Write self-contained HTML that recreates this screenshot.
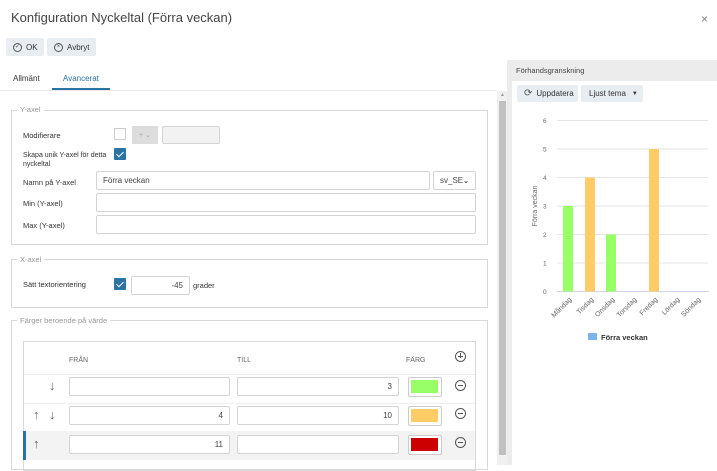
<!DOCTYPE html>
<html><head><meta charset="utf-8"><style>
*{box-sizing:border-box;margin:0;padding:0}
body{width:717px;height:465px;overflow:hidden;background:#fff;font-family:"Liberation Sans",sans-serif;color:#333;position:relative;font-size:8px}
.a{position:absolute}
.inp{position:absolute;border:1px solid #d4d4d4;background:#fff;border-radius:2px;font-size:8px;color:#444;padding:0 6px;display:flex;align-items:center}
.r{justify-content:flex-end}
.cb{position:absolute;width:12px;height:12px;background:#2a73a3;border-radius:1px}
.cb:after{content:"";position:absolute;left:4px;top:1.5px;width:3px;height:6px;border:solid #fff;border-width:0 1.5px 1.5px 0;transform:rotate(45deg)}
.fs{position:absolute;border:1px solid #d8d8d8}
.lg{position:absolute;background:#fff;color:#999;font-size:7.5px;padding:0 3px}
.lbl{position:absolute;font-size:7.5px;color:#333}
.btn{position:absolute;background:#e8edf2;border-radius:2px;font-size:8px;color:#333;display:flex;align-items:center}
.circ{display:inline-block;width:9px;height:9px;border:1px solid #555;border-radius:50%;position:relative;margin-right:4px;font-size:6px;line-height:7px;text-align:center;color:#555}
.sw{position:absolute;border:1px solid #ccc;background:#fff;border-radius:2px}
.sw i{position:absolute;left:2px;top:2px;width:27px;height:13px}
.arr{position:absolute;font-size:13px;color:#666;font-weight:100}
.mi{position:absolute;width:11px;height:11px;border:1px solid #555;border-radius:50%}
.mi:after{content:"";position:absolute;left:2px;top:4px;width:5px;height:1px;background:#555}
</style></head><body>
<div class="a" style="left:11px;top:10px;font-size:13px;color:#444">Konfiguration Nyckeltal (Förra veckan)</div>
<div class="a" style="left:701px;top:12px;font-size:12px;color:#888">×</div>
<div class="btn" style="left:6px;top:38px;width:38px;height:18px;padding-left:7px"><span class="circ">✓</span>OK</div>
<div class="btn" style="left:47px;top:38px;width:49px;height:18px;padding-left:7px"><span class="circ">×</span>Avbryt</div>
<div class="a" style="left:13px;top:74px;font-size:8px">Allmänt</div>
<div class="a" style="left:63px;top:74px;font-size:8px;color:#2a73a3">Avancerat</div>
<div class="a" style="left:52px;top:88px;width:58px;height:2px;background:#2a73a3"></div>
<div class="a" style="left:0;top:90px;width:497px;height:1px;background:#e8e8e8"></div>
<div class="a" style="left:497px;top:91px;width:10px;height:374px;background:#f0f0f0"></div>
<div class="a" style="left:499px;top:101px;width:7px;height:354px;background:#c1c1c1"></div>
<div class="a" style="left:500px;top:92px;font-size:5px;color:#999">▲</div>
<div class="fs" style="left:11px;top:110px;width:477px;height:135px"></div>
<div class="lg" style="left:17px;top:105px">Y-axel</div>
<div class="lbl" style="left:23px;top:131px">Modifierare</div>
<div class="a" style="left:114px;top:128px;width:12px;height:12px;border:1px solid #ccc;background:#fff"></div>
<div class="a" style="left:132px;top:126px;width:26px;height:18px;background:#ddd;color:#aaa;font-size:7px;padding:5px 0 0 7px">+ ⌄</div>
<div class="inp" style="left:162px;top:126px;width:58px;height:18px;background:#f2f2f2"></div>
<div class="lbl" style="left:23px;top:151px;line-height:9px;font-size:7px">Skapa unik Y-axel för detta<br>nyckeltal</div>
<div class="cb" style="left:114px;top:148px"></div>
<div class="lbl" style="left:23px;top:178px">Namn på Y-axel</div>
<div class="inp" style="left:96px;top:171px;width:334px;height:19px">Förra veckan</div>
<div class="inp" style="left:433px;top:171px;width:43px;height:19px;justify-content:space-between">sv_SE <b style="font-size:7px">⌄</b></div>
<div class="lbl" style="left:23px;top:199px">Min (Y-axel)</div>
<div class="inp" style="left:96px;top:193px;width:380px;height:19px"></div>
<div class="lbl" style="left:23px;top:221px">Max (Y-axel)</div>
<div class="inp" style="left:96px;top:215px;width:380px;height:19px"></div>
<div class="fs" style="left:11px;top:259px;width:477px;height:49px"></div>
<div class="lg" style="left:17px;top:255px">X-axel</div>
<div class="lbl" style="left:23px;top:280px">Sätt textorientering</div>
<div class="cb" style="left:114px;top:278px"></div>
<div class="inp r" style="left:131px;top:276px;width:59px;height:19px">-45</div>
<div class="lbl" style="left:193px;top:281px">grader</div>
<div class="fs" style="left:11px;top:320px;width:477px;height:150px"></div>
<div class="lg" style="left:17px;top:316px">Färger beroende på värde</div>
<div class="fs" style="left:23px;top:341px;width:453px;height:130px"></div>
<div class="a" style="left:69px;top:357px;font-size:7px;color:#666">FRÅN</div>
<div class="a" style="left:237px;top:357px;font-size:7px;color:#666">TILL</div>
<div class="a" style="left:406px;top:357px;font-size:7px;color:#666">FÄRG</div>
<div class="mi" style="left:455px;top:351px"></div><div class="a" style="left:460px;top:353px;width:1px;height:5px;background:#555"></div>
<div class="a" style="left:24px;top:374px;width:451px;height:1px;background:#eee"></div>
<div class="a" style="left:24px;top:403px;width:451px;height:1px;background:#eee"></div>
<div class="a" style="left:24px;top:431px;width:451px;height:29px;background:#f3f3f3"></div>
<div class="a" style="left:23px;top:431px;width:3px;height:29px;background:#2a73a3"></div>
<div class="arr" style="left:49px;top:378px">↓</div>
<div class="inp" style="left:69px;top:377px;width:161px;height:19px"></div>
<div class="inp r" style="left:237px;top:377px;width:162px;height:19px">3</div>
<div class="sw" style="left:408px;top:377px;width:34px;height:20px"><i style="background:#99ff66"></i></div>
<div class="mi" style="left:455px;top:380px"></div>
<div class="arr" style="left:33px;top:407px">↑</div><div class="arr" style="left:49px;top:407px">↓</div>
<div class="inp r" style="left:69px;top:406px;width:161px;height:19px">4</div>
<div class="inp r" style="left:237px;top:406px;width:162px;height:19px">10</div>
<div class="sw" style="left:408px;top:406px;width:34px;height:20px"><i style="background:#ffcc66"></i></div>
<div class="mi" style="left:455px;top:408px"></div>
<div class="arr" style="left:33px;top:436px">↑</div>
<div class="inp r" style="left:69px;top:435px;width:161px;height:19px">11</div>
<div class="inp" style="left:237px;top:435px;width:162px;height:19px"></div>
<div class="sw" style="left:408px;top:435px;width:34px;height:20px"><i style="background:#cc0000"></i></div>
<div class="mi" style="left:455px;top:437px"></div>
<div class="a" style="left:507px;top:60px;width:210px;height:405px;background:#ececec"></div>
<div class="a" style="left:512px;top:81px;width:205px;height:384px;background:#fff"></div>
<div class="a" style="left:516px;top:66px;font-size:7.5px;color:#444">Förhandsgranskning</div>
<div class="btn" style="left:517px;top:85px;width:61px;height:17px;padding-left:7px"><span style="font-size:10px;margin-right:4px;color:#555">⟳</span>Uppdatera</div>
<div class="btn" style="left:581px;top:85px;width:62px;height:17px;padding-left:8px">Ljust tema <span style="font-size:6px;margin-left:6px">▼</span></div>
<svg class="a" style="left:512px;top:110px" width="205" height="240" font-family="Liberation Sans" font-size="6.5" fill="#666">
<g stroke="#e6e6e6" stroke-width="1">
<line x1="45" y1="10.5" x2="196" y2="10.5"/><line x1="45" y1="39" x2="196" y2="39"/><line x1="45" y1="67.5" x2="196" y2="67.5"/><line x1="45" y1="96" x2="196" y2="96"/><line x1="45" y1="124.5" x2="196" y2="124.5"/><line x1="45" y1="153" x2="196" y2="153"/></g>
<line x1="45" y1="181.5" x2="197" y2="181.5" stroke="#ccd6eb"/>
<text x="31" y="13">6</text><text x="31" y="41.5">5</text><text x="31" y="70">4</text><text x="31" y="98.5">3</text><text x="31" y="127">2</text><text x="31" y="155.5">1</text><text x="31" y="184">0</text>
<text transform="translate(25,96) rotate(-90)" text-anchor="middle" font-size="7">Förra veckan</text>
<rect x="51" y="96" width="10" height="85.5" fill="#99ff66"/>
<rect x="73" y="67.5" width="10" height="114" fill="#ffcc66"/>
<rect x="94" y="124.5" width="10" height="57" fill="#99ff66"/>
<rect x="137" y="39" width="10" height="142.5" fill="#ffcc66"/>
<g text-anchor="end" font-size="7">
<text transform="translate(60,190) rotate(-45)">Måndag</text>
<text transform="translate(82,190) rotate(-45)">Tisdag</text>
<text transform="translate(103,190) rotate(-45)">Onsdag</text>
<text transform="translate(125,190) rotate(-45)">Torsdag</text>
<text transform="translate(146,190) rotate(-45)">Fredag</text>
<text transform="translate(168,190) rotate(-45)">Lördag</text>
<text transform="translate(189,190) rotate(-45)">Söndag</text></g>
<rect x="76" y="223" width="9" height="7" fill="#7cb5ec"/>
<text x="89" y="230" font-weight="bold" fill="#333" font-size="7.5">Förra veckan</text>
</svg>
</body></html>
